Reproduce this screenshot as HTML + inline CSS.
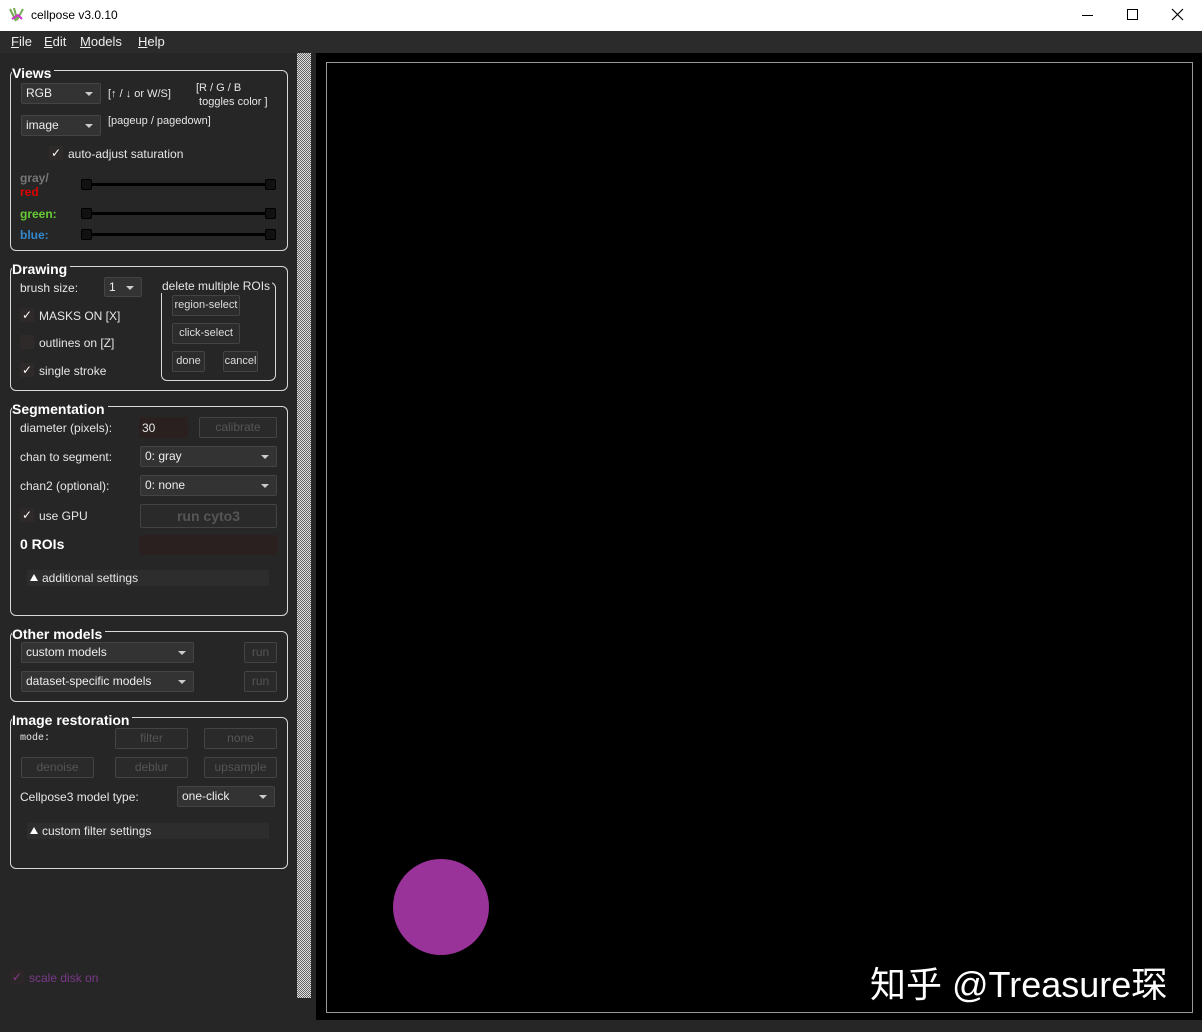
<!DOCTYPE html>
<html><head><meta charset="utf-8"><style>
*{margin:0;padding:0;box-sizing:border-box}
body{width:1202px;height:1032px;background:#262626;font-family:"Liberation Sans",Arial,sans-serif;font-size:12px;color:#e6e6e6;position:relative;overflow:hidden}
.a{position:absolute}
.title{left:0;top:0;width:1202px;height:31px;background:#fff;color:#000;font-size:12px}
.menu{top:31px;left:0;width:1202px;height:22px;background:#2b2b2b;font-size:13px}
.menu span{position:absolute;top:3px;color:#eee}
.grp{border:1px solid #d8d8d8;border-radius:6px}
.gt{font-weight:bold;font-size:14px;color:#fff;background:#262626;padding-right:3px}
.cb{background:#333;border:1px solid #444;border-radius:2px;color:#eee;padding-left:4px;line-height:18px}
.cb:after{content:"";position:absolute;right:7px;top:8px;border:4px solid transparent;border-top:4px solid #ccc}
.btn{border:1px solid #444;background:#2a2a2a;border-radius:2px;text-align:center;color:#555;line-height:19px}
.btn.on{color:#ddd;background:#2c2c2c}
.chk{width:14px;height:14px;background:#2e2a2a;color:#fff;font-size:12px;line-height:14px;text-align:center}
.sl{height:3px;background:#000}
.h{width:11px;height:11px;background:#111;border:1px solid #000;border-radius:2px}
.scroll{background-image:repeating-conic-gradient(#ddd 0 25%,#666 0 50%);background-size:2px 2px}
</style></head><body>
<div class="a title">
<svg class="a" style="left:8px;top:7px" width="18" height="16"><path d="M2 2 L8 14 M6 1 L9 12 M15 2 L9 13" stroke="#7a5" stroke-width="2"/><path d="M4 12 L10 8 L14 12" stroke="#c3c" stroke-width="2" fill="none"/></svg>
<span class="a" style="left:31px;top:8px">cellpose v3.0.10</span>
<div class="a" style="left:1082px;top:15px;width:11px;height:1px;background:#000"></div>
<div class="a" style="left:1127px;top:9px;width:11px;height:11px;border:1px solid #000"></div>
<svg class="a" style="left:1171px;top:8px" width="13" height="13"><path d="M1 1L12 12M12 1L1 12" stroke="#000" stroke-width="1.2"/></svg>
</div>
<div class="a menu"><span style="left:11px"><u>F</u>ile</span><span style="left:44px"><u>E</u>dit</span><span style="left:80px"><u>M</u>odels</span><span style="left:138px"><u>H</u>elp</span></div>

<div class="a scroll" style="left:297px;top:53px;width:14px;height:945px"></div>
<div class="a" style="left:316px;top:53px;width:886px;height:967px;background:#000"></div>
<div class="a" style="left:326px;top:62px;width:867px;height:951px;border:1px solid #999"></div>
<svg class="a" style="left:392px;top:857px" width="98" height="101"><circle cx="49" cy="50" r="48" fill="#993399"/></svg>
<div class="a" style="left:870px;top:956px;font-size:36px;color:#fff;font-family:'Liberation Sans','Noto Sans CJK SC',sans-serif">知乎 @Treasure琛</div>

<!-- Views -->
<div class="a grp" style="left:10px;top:70px;width:278px;height:181px"></div>
<div class="a gt" style="left:12px;top:65px">Views</div>
<div class="a cb" style="left:21px;top:83px;width:80px;height:21px">RGB</div>
<div class="a" style="left:108px;top:88px;font-size:11px">[↑ / ↓ or W/S]</div>
<div class="a" style="left:196px;top:81px;font-size:11px;line-height:14px">[R / G / B<br>&nbsp;toggles color ]</div>
<div class="a cb" style="left:21px;top:115px;width:80px;height:21px">image</div>
<div class="a" style="left:108px;top:115px;font-size:11px">[pageup / pagedown]</div>
<div class="a chk" style="left:49px;top:146px">✓</div>
<div class="a" style="left:68px;top:147px">auto-adjust saturation</div>
<div class="a" style="left:20px;top:171px;font-weight:bold;color:#777;line-height:14px">gray/<br><span style="color:#d00">red</span></div>
<div class="a" style="left:20px;top:207px;font-weight:bold;color:#6c3">green:</div>
<div class="a" style="left:20px;top:228px;font-weight:bold;color:#38c">blue:</div>
<div class="a sl" style="left:86px;top:183px;width:190px"></div><div class="a h" style="left:81px;top:179px"></div><div class="a h" style="left:265px;top:179px"></div>
<div class="a sl" style="left:86px;top:212px;width:190px"></div><div class="a h" style="left:81px;top:208px"></div><div class="a h" style="left:265px;top:208px"></div>
<div class="a sl" style="left:86px;top:233px;width:190px"></div><div class="a h" style="left:81px;top:229px"></div><div class="a h" style="left:265px;top:229px"></div>

<!-- Drawing -->
<div class="a grp" style="left:10px;top:266px;width:278px;height:125px"></div>
<div class="a gt" style="left:12px;top:261px">Drawing</div>
<div class="a" style="left:20px;top:281px">brush size:</div>
<div class="a cb" style="left:104px;top:277px;width:38px;height:20px">1</div>
<div class="a grp" style="left:161px;top:282px;width:115px;height:99px"></div>
<div class="a" style="left:160px;top:279px;background:#262626;padding:0 2px">delete multiple ROIs</div>
<div class="a btn on" style="left:172px;top:295px;width:68px;height:21px;font-size:11px">region-select</div>
<div class="a btn on" style="left:172px;top:323px;width:68px;height:21px;font-size:11px">click-select</div>
<div class="a btn on" style="left:172px;top:351px;width:33px;height:21px;font-size:11px">done</div>
<div class="a btn on" style="left:223px;top:351px;width:35px;height:21px;font-size:11px">cancel</div>
<div class="a chk" style="left:20px;top:308px">✓</div><div class="a" style="left:39px;top:309px">MASKS ON [X]</div>
<div class="a chk" style="left:20px;top:335px"></div><div class="a" style="left:39px;top:336px">outlines on [Z]</div>
<div class="a chk" style="left:20px;top:363px">✓</div><div class="a" style="left:39px;top:364px">single stroke</div>

<!-- Segmentation -->
<div class="a grp" style="left:10px;top:406px;width:278px;height:210px"></div>
<div class="a gt" style="left:12px;top:401px">Segmentation</div>
<div class="a" style="left:20px;top:421px">diameter (pixels):</div>
<div class="a" style="left:139px;top:417px;width:49px;height:21px;background:#2a2020;padding:4px 3px">30</div>
<div class="a btn" style="left:199px;top:417px;width:78px;height:21px">calibrate</div>
<div class="a" style="left:20px;top:450px">chan to segment:</div>
<div class="a cb" style="left:140px;top:446px;width:137px;height:21px">0: gray</div>
<div class="a" style="left:20px;top:479px">chan2 (optional):</div>
<div class="a cb" style="left:140px;top:475px;width:137px;height:21px">0: none</div>
<div class="a chk" style="left:20px;top:508px">✓</div><div class="a" style="left:39px;top:509px">use GPU</div>
<div class="a btn" style="left:140px;top:504px;width:137px;height:24px;font-size:14px;font-weight:bold;line-height:22px">run cyto3</div>
<div class="a" style="left:20px;top:536px;font-size:14px;font-weight:bold;color:#fff">0 ROIs</div>
<div class="a" style="left:139px;top:535px;width:139px;height:20px;background:#2a2020"></div>
<div class="a" style="left:27px;top:570px;width:242px;height:16px;background:#2d2d2d;padding-left:15px;line-height:16px">additional settings</div>
<div class="a" style="left:30px;top:574px;border:4px solid transparent;border-bottom:7px solid #fff;border-top:0"></div>

<!-- Other models -->
<div class="a grp" style="left:10px;top:631px;width:278px;height:71px"></div>
<div class="a gt" style="left:12px;top:626px">Other models</div>
<div class="a cb" style="left:21px;top:642px;width:173px;height:21px">custom models</div>
<div class="a btn" style="left:244px;top:642px;width:33px;height:21px">run</div>
<div class="a cb" style="left:21px;top:671px;width:173px;height:21px">dataset-specific models</div>
<div class="a btn" style="left:244px;top:671px;width:33px;height:21px">run</div>

<!-- Image restoration -->
<div class="a grp" style="left:10px;top:717px;width:278px;height:152px"></div>
<div class="a gt" style="left:12px;top:712px">Image restoration</div>
<div class="a" style="left:20px;top:733px;font-family:'Liberation Mono',monospace;font-size:10px">mode:</div>
<div class="a btn" style="left:115px;top:728px;width:73px;height:21px">filter</div>
<div class="a btn" style="left:204px;top:728px;width:73px;height:21px">none</div>
<div class="a btn" style="left:21px;top:757px;width:73px;height:21px">denoise</div>
<div class="a btn" style="left:115px;top:757px;width:73px;height:21px">deblur</div>
<div class="a btn" style="left:204px;top:757px;width:73px;height:21px">upsample</div>
<div class="a" style="left:20px;top:790px">Cellpose3 model type:</div>
<div class="a cb" style="left:177px;top:786px;width:98px;height:21px">one-click</div>
<div class="a" style="left:27px;top:823px;width:242px;height:16px;background:#2d2d2d;padding-left:15px;line-height:16px">custom filter settings</div>
<div class="a" style="left:30px;top:827px;border:4px solid transparent;border-bottom:7px solid #fff;border-top:0"></div>

<div class="a chk" style="left:10px;top:970px;color:#8a3a8a;background:#2c2628">✓</div>
<div class="a" style="left:29px;top:971px;color:#7a3a8a">scale disk on</div>
</body></html>
